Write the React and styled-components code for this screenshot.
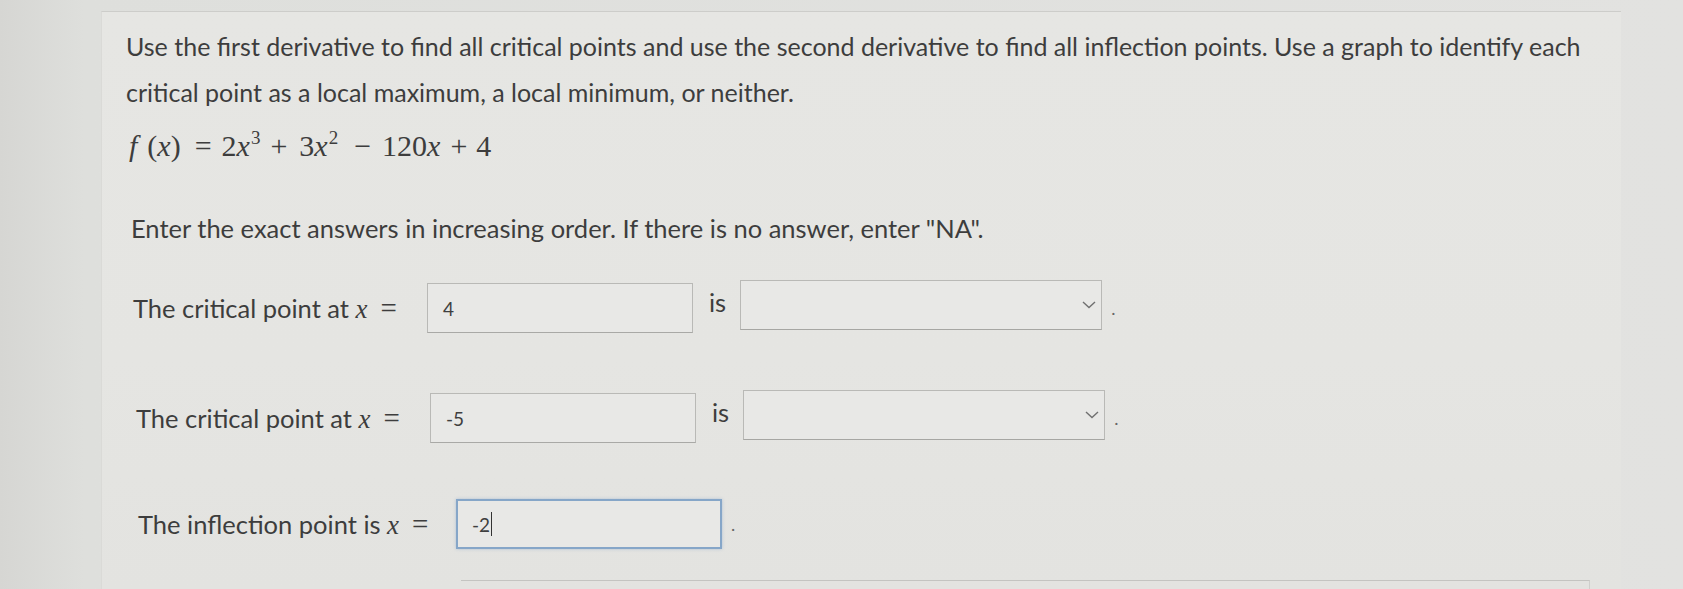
import styled, { createGlobalStyle } from "styled-components";

const Global = createGlobalStyle`
  html, body {
    margin: 0;
    padding: 0;
    background: #d8d8d5;
  }
  #root {
    height: 589px;
    overflow: hidden;
  }
`;

const Screen = styled.div`
  display: flex;
  height: 589px;
  background: linear-gradient(90deg, #d6d6d3 0%, #dedfdc 5%, #e2e2e0 100%);
`;

const Gutter = styled.div`
  width: ${(p) => p.$w}px;
  flex: none;
`;

const Panel = styled.div`
  flex: 1;
  margin-top: 11px;
  border-top: 1px solid #cdcdca;
  border-left: 1px solid #dadad7;
  background: linear-gradient(180deg, #e6e6e3 0%, #e5e5e2 60%, #e3e3e0 100%);
  padding: 11px 0 0 24px;
  color: #3d3d3d;
  font-family: Lato, "Open Sans", sans-serif;
  font-size: 25px;
`;

const Question = styled.p`
  margin: 0;
  line-height: 46px;
  max-width: 1480px;
`;

const Formula = styled.div`
  margin-top: 11px;
  display: flex;
  align-items: baseline;
  padding-left: 3px;
  font-family: "Liberation Serif", "DejaVu Serif", serif;
  font-size: 30px;
  line-height: 40px;
`;

const Var = styled.i`
  font-family: "Liberation Serif", "DejaVu Serif", serif;
  font-style: italic;
`;

const Paren = styled.span`
  margin-left: 10px;
`;

const Op = styled.span`
  margin: 0 ${(p) => p.$r ?? 11}px 0 ${(p) => p.$l ?? 11}px;
`;

const Sup = styled.sup`
  font-size: 19px;
  vertical-align: 12px;
  line-height: 0;
  margin-left: 1px;
`;

const Instructions = styled.p`
  margin: 42px 0 0 5px;
  line-height: 40px;
  font-size: 25.5px;
`;

const Row = styled.div`
  display: flex;
  align-items: center;
  margin-top: ${(p) => p.$top}px;
  padding-left: ${(p) => p.$indent}px;
  height: 52px;
  font-size: 25.5px;
`;

const Label = styled.span`
  width: ${(p) => p.$w}px;
  flex: none;
  white-space: nowrap;
`;

const LabelVar = styled(Var)`
  font-size: 27px;
`;

const Eq = styled.span`
  font-family: "Liberation Serif", "DejaVu Serif", serif;
  font-size: 29px;
  margin-left: 13px;
`;

const Input = styled.div`
  width: 266px;
  height: 50px;
  box-sizing: border-box;
  border: ${(p) => (p.$focus ? "2px solid #86a6c8" : "1px solid #b9b9b6")};
  border-bottom-color: ${(p) => (p.$focus ? "#86a6c8" : "#a9a9a6")};
  box-shadow: ${(p) => (p.$focus ? "0 0 3px rgba(110,150,200,0.45)" : "none")};
  background: #e8e8e6;
  display: flex;
  align-items: center;
  padding-left: ${(p) => (p.$focus ? 14 : 15)}px;
  font-size: 19px;
  color: #3f3f3f;
`;

const Caret = styled.span`
  display: inline-block;
  width: 1px;
  height: 24px;
  background: #333;
  margin-left: 1px;
`;

const Is = styled.span`
  margin: -12px 14px 0 16px;
`;

const Select = styled.div`
  width: 362px;
  height: 50px;
  box-sizing: border-box;
  border: 1px solid #b9b9b6;
  border-bottom-color: #a6a6a3;
  background: #e8e8e6;
  display: flex;
  align-items: center;
  justify-content: flex-end;
  padding-right: 5px;
  margin-top: -6px;
`;

const Dot = styled.span`
  margin-left: 9px;
  font-size: 18px;
  color: #666;
`;

const BottomBox = styled.div`
  margin: 30px 0 0 335px;
  width: 1128px;
  height: 40px;
  border-top: 1px solid #c4c4c1;
  border-right: 1px solid #cfcfcc;
`;

const Chevron = () => (
  <svg width="14" height="8" viewBox="0 0 14 8">
    <path d="M1 1 L7 6.5 L13 1" fill="none" stroke="#707070" strokeWidth="1.4" />
  </svg>
);

export default function App() {
  return (
    <>
      <Global />
      <Screen>
        <Gutter $w={101} />
        <Panel>
          <Question>
            Use the first derivative to find all critical points and use the second derivative to find all inflection
            points. Use a graph to identify each critical point as a local maximum, a local minimum, or neither.
          </Question>
          <Formula>
            <Var>f</Var>
            <Paren>
              (<Var>x</Var>)
            </Paren>
            <Op $l={14} $r={10}>=</Op>
            <span>
              2<Var>x</Var>
              <Sup>3</Sup>
            </span>
            <Op $l={10} $r={12}>+</Op>
            <span>
              3<Var>x</Var>
              <Sup>2</Sup>
            </span>
            <Op $l={16} $r={11}>−</Op>
            <span>
              120<Var>x</Var>
            </span>
            <Op $l={10} $r={9}>+</Op>
            <span>4</span>
          </Formula>
          <Instructions>Enter the exact answers in increasing order. If there is no answer, enter "NA".</Instructions>

          <Row $top={34} $indent={7}>
            <Label $w={294}>
              The critical point at <LabelVar>x</LabelVar>
              <Eq>=</Eq>
            </Label>
            <Input>4</Input>
            <Is>is</Is>
            <Select>
              <Chevron />
            </Select>
            <Dot>.</Dot>
          </Row>

          <Row $top={58} $indent={10}>
            <Label $w={294}>
              The critical point at <LabelVar>x</LabelVar>
              <Eq>=</Eq>
            </Label>
            <Input>-5</Input>
            <Is>is</Is>
            <Select>
              <Chevron />
            </Select>
            <Dot>.</Dot>
          </Row>

          <Row $top={54} $indent={12}>
            <Label $w={318}>
              The inflection point is <LabelVar>x</LabelVar>
              <Eq>=</Eq>
            </Label>
            <Input $focus>
              -2
              <Caret />
            </Input>
            <Dot>.</Dot>
          </Row>

          <BottomBox />
        </Panel>
        <Gutter $w={62} />
      </Screen>
    </>
  );
}
